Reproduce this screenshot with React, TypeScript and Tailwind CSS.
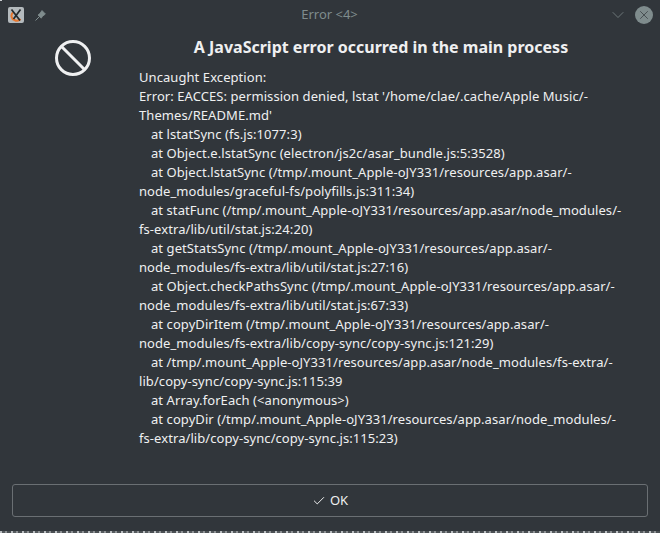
import React from 'react';
import { Check, ChevronDown, X } from 'lucide-react';

const lines = [
  'Uncaught Exception:',
  "Error: EACCES: permission denied, lstat '/home/clae/.cache/Apple Music/-",
  "Themes/README.md'",
  '    at lstatSync (fs.js:1077:3)',
  '    at Object.e.lstatSync (electron/js2c/asar_bundle.js:5:3528)',
  '    at Object.lstatSync (/tmp/.mount_Apple-oJY331/resources/app.asar/-',
  'node_modules/graceful-fs/polyfills.js:311:34)',
  '    at statFunc (/tmp/.mount_Apple-oJY331/resources/app.asar/node_modules/-',
  'fs-extra/lib/util/stat.js:24:20)',
  '    at getStatsSync (/tmp/.mount_Apple-oJY331/resources/app.asar/-',
  'node_modules/fs-extra/lib/util/stat.js:27:16)',
  '    at Object.checkPathsSync (/tmp/.mount_Apple-oJY331/resources/app.asar/-',
  'node_modules/fs-extra/lib/util/stat.js:67:33)',
  '    at copyDirItem (/tmp/.mount_Apple-oJY331/resources/app.asar/-',
  'node_modules/fs-extra/lib/copy-sync/copy-sync.js:121:29)',
  '    at /tmp/.mount_Apple-oJY331/resources/app.asar/node_modules/fs-extra/-',
  'lib/copy-sync/copy-sync.js:115:39',
  '    at Array.forEach (<anonymous>)',
  '    at copyDir (/tmp/.mount_Apple-oJY331/resources/app.asar/node_modules/-',
  'fs-extra/lib/copy-sync/copy-sync.js:115:23)',
];

export default function App() {
  return (
    <div className="relative w-[660px] h-[533px] overflow-hidden flex flex-col bg-[#31363b] text-[#eff0f1] text-[13px] font-['Noto_Sans',sans-serif]">
      <span className="absolute top-0 left-0 w-[2px] h-px bg-[#c9cdd0]" />

      {/* title bar */}
      <div className="h-[29px] shrink-0 flex items-center pl-2 pr-[7px] text-[#7f8c8d]">
        <div className="w-4 h-4 rounded-[2px] bg-[#b4babd] flex items-center justify-center">
          <svg viewBox="0 0 16 16" className="w-4 h-4">
            <path d="M5 5.5a4.4 4.4 0 0 0 1.5 7.5 5 5 0 0 0 6-1" fill="none" stroke="#e8772e" strokeWidth="2" />
            <path d="M3.5 2.5l8.5 11M12.5 2.5L5.5 12" stroke="#23282b" strokeWidth="1.7" fill="none" />
          </svg>
        </div>
        <svg viewBox="0 0 12 12" className="w-3 h-3 ml-[11px]">
          <path d="M0.5 11.5l4-4" stroke="#7f8c8d" strokeWidth="1" />
          <path d="M3 6l3.2 3.2 1.2-1.8 3-2.4L7 1.5 4.8 4.6z" fill="#7f8c8d" stroke="#7f8c8d" strokeWidth="0.8" />
        </svg>
        <div className="flex-1 text-center text-[13px] pl-[4px]">Error &lt;4&gt;</div>
        <ChevronDown className="w-[20px] h-[20px] mr-[7px]" strokeWidth={0.9} />
        <div className="w-[18px] h-[18px] rounded-full bg-[#7f8c8d] flex items-center justify-center text-[#31363b]">
          <X className="w-[14px] h-[14px]" strokeWidth={1.2} />
        </div>
      </div>

      {/* message */}
      <div className="flex flex-1 min-h-0">
        <div className="w-[139px] shrink-0 pt-[10px] pl-[54px]">
          <svg viewBox="0 0 38 38" className="w-[38px] h-[38px]">
            <circle cx="19" cy="19" r="16.5" fill="none" stroke="#eff0f1" strokeWidth="3" />
            <path d="M7.5 7.5l23 23" stroke="#eff0f1" strokeWidth="3" />
          </svg>
        </div>
        <div className="flex-1 pr-3">
          <h1 className="text-[16px] font-bold leading-[20px] text-center pt-[8px] pr-[25px] pb-[11px]">
            A JavaScript error occurred in the main process
          </h1>
          {lines.map((line, i) => (
            <div
              key={i}
              className={`h-[19px] leading-[19px] whitespace-pre tracking-[0.07px] ${line.startsWith('    ') ? 'pl-[12px]' : ''}`}
            >
              {line.trim()}
            </div>
          ))}
        </div>
      </div>

      {/* button */}
      <div className="shrink-0 px-3 pb-[14px]">
        <button className="w-full h-[33px] rounded-[3px] border border-[#6a6f73] bg-[#31363b] flex items-center justify-center gap-1">
          <Check className="w-[14px] h-[14px] text-[#eff0f1]" strokeWidth={1.7} />
          <span>OK</span>
        </button>
      </div>

      {/* sliver of the window underneath */}
      <div className="h-[2px] shrink-0 bg-[repeating-linear-gradient(90deg,#b9bdc0_0px,#b9bdc0_2px,#565b5f_2px,#565b5f_5px,#8d9194_5px,#8d9194_7px,#4a4f53_7px,#4a4f53_11px)]" />
    </div>
  );
}
